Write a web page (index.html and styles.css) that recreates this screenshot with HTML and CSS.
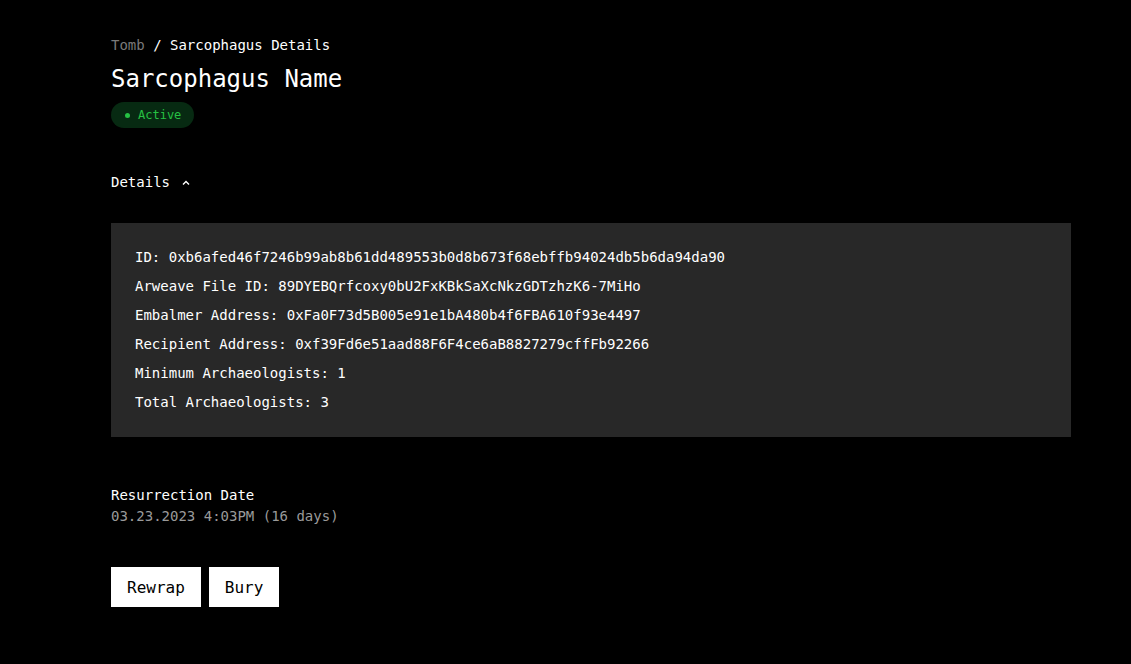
FILE: index.html
```html
<!DOCTYPE html>
<html>
<head>
<meta charset="utf-8">
<link rel="stylesheet" href="styles.css">
</head>
<body>
<main class="page">
  <nav class="crumbs"><span class="crumb-muted">Tomb</span> / Sarcophagus Details</nav>
  <h1 class="title">Sarcophagus Name</h1>
  <div class="badge"><span class="dot"></span>Active</div>

  <button class="toggle">Details <svg class="chev" width="8" height="6" viewBox="0 0 8 6"><path d="M1 4.5 L4 1.5 L7 4.5" fill="none" stroke="#fff" stroke-width="1.4"/></svg></button>

  <section class="details">
    <div class="row">ID: 0xb6afed46f7246b99ab8b61dd489553b0d8b673f68ebffb94024db5b6da94da90</div>
    <div class="row">Arweave File ID: 89DYEBQrfcoxy0bU2FxKBkSaXcNkzGDTzhzK6-7MiHo</div>
    <div class="row">Embalmer Address: 0xFa0F73d5B005e91e1bA480b4f6FBA610f93e4497</div>
    <div class="row">Recipient Address: 0xf39Fd6e51aad88F6F4ce6aB8827279cffFb92266</div>
    <div class="row">Minimum Archaeologists: 1</div>
    <div class="row">Total Archaeologists: 3</div>
  </section>

  <section class="resurrection">
    <div class="label">Resurrection Date</div>
    <div class="value">03.23.2023 4:03PM (16 days)</div>
  </section>

  <div class="actions">
    <button class="btn">Rewrap</button>
    <button class="btn">Bury</button>
  </div>
</main>
</body>
</html>
```

FILE: styles.css
```css
html, body {
  margin: 0;
  padding: 0;
  background: #000;
  color: #fff;
  font-family: "DejaVu Sans Mono", "Liberation Mono", monospace;
}
.page {
  width: 960px;
  margin-left: 111px;
  padding-top: 35px;
}
.crumbs {
  font-size: 14px;
  line-height: 21px;
  color: #fff;
}
.crumb-muted { color: #7a7a7a; }
.title {
  margin: 8px 0 0;
  font-size: 24px;
  font-weight: normal;
  line-height: 30px;
}
.badge {
  display: inline-flex;
  align-items: center;
  gap: 8px;
  margin-top: 8px;
  height: 26px;
  padding: 0 13px 0 14px;
  border-radius: 13px;
  background: #072a12;
  color: #26c043;
  font-size: 12px;
}
.dot {
  width: 5px;
  height: 5px;
  border-radius: 50%;
  background: #26c043;
}
.toggle {
  display: flex;
  align-items: center;
  gap: 12px;
  margin-top: 44px;
  padding: 0;
  background: none;
  border: 0;
  color: #fff;
  font-family: inherit;
  font-size: 14px;
  line-height: 21px;
}
.details {
  margin-top: 30px;
  background: #282828;
  padding: 24px;
  display: flex;
  flex-direction: column;
  gap: 8px;
}
.row {
  font-size: 14px;
  line-height: 21px;
}
.resurrection {
  margin-top: 48px;
}
.label {
  font-size: 14px;
  line-height: 21px;
}
.value {
  font-size: 14px;
  line-height: 21px;
  color: #9a9a9a;
}
.actions {
  display: flex;
  gap: 8px;
  margin-top: 40px;
}
.btn {
  height: 40px;
  padding: 0 16px;
  background: #fff;
  color: #000;
  border: 0;
  border-radius: 0;
  font-family: inherit;
  font-size: 16px;
}
```
